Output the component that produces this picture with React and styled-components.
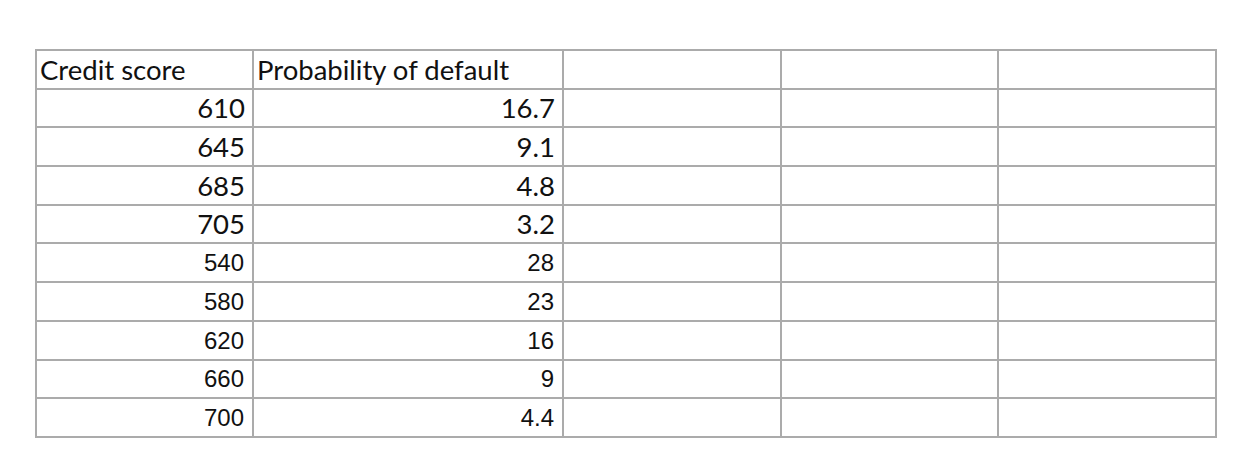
import React from 'react';
import styled, { createGlobalStyle } from 'styled-components';

const GlobalStyle = createGlobalStyle`
  html, body {
    margin: 0;
    padding: 0;
    background: #ffffff;
  }
`;

const Page = styled.div`
  padding: 49px 0 0 35px;
  width: 1244px;
  height: 460px;
  box-sizing: border-box;
  overflow: hidden;
`;

const Sheet = styled.table`
  border-collapse: collapse;
  table-layout: fixed;
  color: #111;
`;

const Col = styled.col`
  width: ${p => p.$w}px;
`;

const Row = styled.tr`
  height: 38.7px;
`;

const Cell = styled.td`
  border: 2px solid #ababab;
  padding: 0 ${p => (p.$arial ? 8 : 7)}px 4px 3px;
  vertical-align: bottom;
  text-align: ${p => (p.$num ? 'right' : 'left')};
  font-family: ${p => (p.$arial ? '"Liberation Sans", Arial, sans-serif' : 'Lato, "Open Sans", sans-serif')};
  font-size: ${p => (p.$arial ? 24 : 27.5)}px;
  line-height: 28px;
  white-space: nowrap;
  overflow: hidden;
`;

const widths = [217, 310, 218, 217, 218];

const rows = [
  { score: '610', pd: '16.7', arial: false },
  { score: '645', pd: '9.1', arial: false },
  { score: '685', pd: '4.8', arial: false },
  { score: '705', pd: '3.2', arial: false },
  { score: '540', pd: '28', arial: true },
  { score: '580', pd: '23', arial: true },
  { score: '620', pd: '16', arial: true },
  { score: '660', pd: '9', arial: true },
  { score: '700', pd: '4.4', arial: true },
];

export default function App() {
  return (
    <Page>
      <GlobalStyle />
      <Sheet>
        <colgroup>
          {widths.map((w, i) => (
            <Col key={i} $w={w} />
          ))}
        </colgroup>
        <tbody>
          <Row>
            <Cell>Credit score</Cell>
            <Cell>Probability of default</Cell>
            <Cell />
            <Cell />
            <Cell />
          </Row>
          {rows.map(r => (
            <Row key={r.score}>
              <Cell $num $arial={r.arial}>{r.score}</Cell>
              <Cell $num $arial={r.arial}>{r.pd}</Cell>
              <Cell />
              <Cell />
              <Cell />
            </Row>
          ))}
        </tbody>
      </Sheet>
    </Page>
  );
}
